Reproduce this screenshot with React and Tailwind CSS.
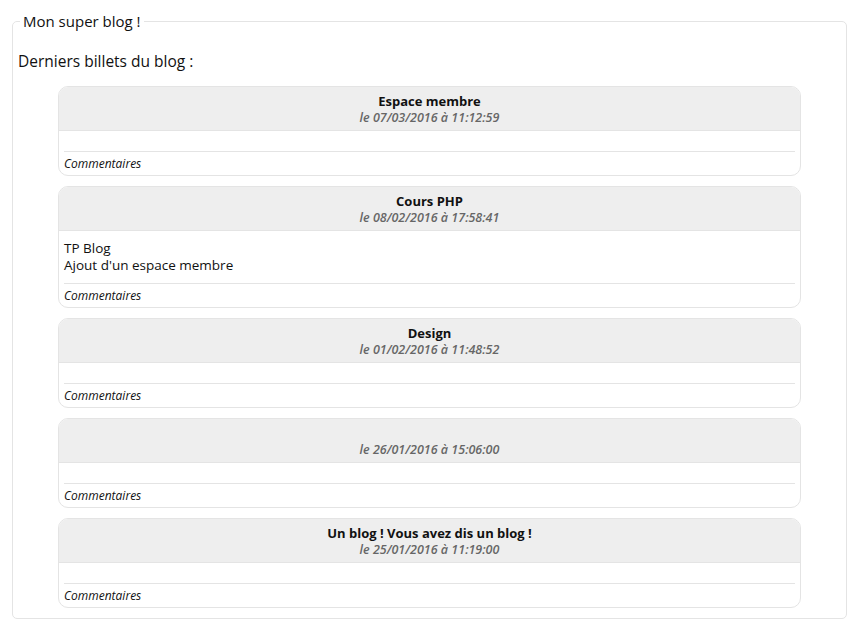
const billets = [
  { titre: "Espace membre", date: "le 07/03/2016 à 11:12:59", contenu: [] },
  { titre: "Cours PHP", date: "le 08/02/2016 à 17:58:41", contenu: ["TP Blog", "Ajout d'un espace membre"] },
  { titre: "Design", date: "le 01/02/2016 à 11:48:52", contenu: [] },
  { titre: "", date: "le 26/01/2016 à 15:06:00", contenu: [] },
  { titre: "Un blog ! Vous avez dis un blog !", date: "le 25/01/2016 à 11:19:00", contenu: [] },
];

function Billet({ billet }) {
  return (
    <div className="mx-[40px] mb-[10px] rounded-[10px] border border-[#e4e4e4] bg-white overflow-hidden">
      <div className="bg-[#eeeeee] text-center pt-[6px] pb-[5px] border-b border-[#e4e4e4]">
        <div className="h-[17px] leading-[17px] text-[13px] font-bold text-[#111]">{billet.titre}</div>
        <div className="h-[15px] leading-[15px] text-[12.5px] italic font-semibold text-[#666]">{billet.date}</div>
      </div>
      <div className="min-h-[20px] px-[5px] pt-[9px] pb-[9px] text-[13.5px] leading-[17px] text-[#111]">
        {billet.contenu.map((ligne, i) => (
          <div key={i}>{ligne}</div>
        ))}
      </div>
      <div className="mx-[5px] border-t border-[#e4e4e4] pt-[4px] pb-[4px] text-[12px] leading-[15px] italic text-[#111]">
        Commentaires
      </div>
    </div>
  );
}

export default function App() {
  return (
    <div className="min-h-[635px] bg-white pt-[12px] px-[12px] text-[#111]" style={{ fontFamily: "'Open Sans', Lato, sans-serif" }}>
      <fieldset className="border border-[#e4e4e4] rounded-[5px] px-[5px] pb-0 w-[835px]">
        <legend className="ml-[2px] px-[3px] text-[15px] leading-[18px]">Mon super blog !</legend>
        <p className="mt-[22px] mb-[16px] text-[15.5px] leading-[18px]">Derniers billets du blog :</p>
        {billets.map((b, i) => (
          <Billet key={i} billet={b} />
        ))}
      </fieldset>
    </div>
  );
}
